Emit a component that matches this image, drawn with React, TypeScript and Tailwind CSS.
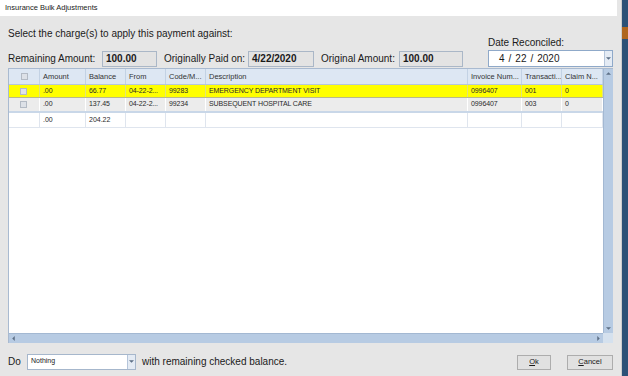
import React from "react";

const COLS = "grid grid-cols-[31px_46px_40px_40px_40px_262px_54px_40px_41px]";

function Tri({ dir, className = "" }: { dir: "up" | "down" | "left" | "right"; className?: string }) {
  const pts =
    dir === "up" ? "0,4 4,0 8,4" : dir === "down" ? "0,0 8,0 4,4" : dir === "left" ? "4,0 4,8 0,4" : "0,0 0,8 4,4";
  const w = dir === "up" || dir === "down" ? 8 : 4;
  const h = dir === "up" || dir === "down" ? 4 : 8;
  return (
    <svg width={w / 2 + 1} height={h / 2 + 1} viewBox={`0 0 ${w} ${h}`} className={className}>
      <polygon points={pts} fill="#5d6f86" />
    </svg>
  );
}

function Check() {
  return <div className="w-[7px] h-[7px] border border-[#b3bac4] bg-[#dde1e7]" />;
}

const headers = ["", "Amount", "Balance", "From", "Code/M...", "Description", "Invoice Num...", "Transacti...", "Claim N..."];

const rows = [
  { cells: [".00", "66.77", "04-22-2...", "99283", "EMERGENCY DEPARTMENT VISIT", "0996407", "001", "0"], bg: "bg-[#ffff00]", sep: "border-[#e2e27a]", border: "border-b border-[#b9b98a]" },
  { cells: [".00", "137.45", "04-22-2...", "99234", "SUBSEQUENT HOSPITAL CARE", "0996407", "003", "0"], bg: "bg-[#ececec]", sep: "border-[#ffffff]", border: "" },
];

export default function App() {
  return (
    <div className="w-[628px] h-[376px] flex overflow-hidden font-['Liberation_Sans',Arial,sans-serif] text-[#1a1a1a]">
      <div className="w-[622px] h-full flex flex-col bg-[#e6e6e6] border-r border-[#cdcdcd]">
        <div className="h-[16px] bg-white flex items-center pl-[5px] mr-[4px] text-[7.5px] text-[#222]">
          Insurance Bulk Adjustments
        </div>
        <div className="flex-1 flex flex-col px-[8px]">
          <div className="h-[52px] flex justify-between">
            <div className="flex flex-col">
              <div className="mt-[12px] text-[10px] leading-[12px]">Select the charge(s) to apply this payment against:</div>
              <div className="mt-[11px] h-[16px] flex items-center text-[10px] leading-[12px]">
                <span className="w-[94px]">Remaining Amount:</span>
                <div className="w-[55px] h-[16px] border border-[#aab7c7] bg-[#e3e3e3] flex items-center pl-[3px] font-bold">100.00</div>
                <span className="w-[84px] ml-[7px]">Originally Paid on:</span>
                <div className="w-[66px] h-[16px] border border-[#aab7c7] bg-[#e3e3e3] flex items-center pl-[3px] font-bold">4/22/2020</div>
                <span className="w-[78px] ml-[7px]">Original Amount:</span>
                <div className="w-[64px] h-[16px] border border-[#aab7c7] bg-[#e3e3e3] flex items-center pl-[3px] font-bold">100.00</div>
              </div>
            </div>
            <div className="w-[125px] flex flex-col justify-end pb-[1px]">
              <div className="text-[10px] leading-[12px]">Date Reconciled:</div>
              <div className="mt-[1px] h-[17px] border border-[#8fa9c9] bg-white flex text-[10px]">
                <div className="flex-1 flex items-center pl-[10px] gap-[4px]">
                  <span>4</span>
                  <span>/</span>
                  <span>22</span>
                  <span>/</span>
                  <span>2020</span>
                </div>
                <div className="w-[8px] border-l border-[#b5c5da] bg-[#e4ebf4] flex items-center justify-center">
                  <Tri dir="down" />
                </div>
              </div>
            </div>
          </div>

          <div className="h-[275px] flex flex-col border-l border-t border-[#a9bad0]">
            <div className="flex-1 flex min-h-0">
              <div className="flex-1 bg-white flex flex-col">
                <div className={`${COLS} h-[16px] bg-[#dde7f3] border-b border-[#b6c7dc]`}>
                  {headers.map((h, i) => (
                    <div key={i} className="border-r border-[#c3d2e4] flex items-center pl-[3px] text-[7.5px] text-[#333] whitespace-nowrap overflow-hidden">
                      {i === 0 ? (
                        <div className="w-full flex justify-center pr-[3px]">
                          <Check />
                        </div>
                      ) : (
                        h
                      )}
                    </div>
                  ))}
                </div>
                {rows.map((r, ri) => (
                  <div key={ri} className={`${COLS} h-[13px] ${r.bg} ${r.border}`}>
                    <div className={`border-r ${r.sep} flex items-center justify-center pr-[1px]`}>
                      <Check />
                    </div>
                    {r.cells.map((c, ci) => (
                      <div key={ci} className={`border-r ${r.sep} flex items-center pl-[3px] text-[7px] tracking-[-0.1px] text-[#2a2a2a] whitespace-nowrap overflow-hidden`}>
                        {c}
                      </div>
                    ))}
                  </div>
                ))}
                <div className="h-[2px] bg-[#c9d7e8]" />
                <div className={`${COLS} h-[15px] border-b border-[#dfe5ee]`}>
                  {["", ".00", "204.22", "", "", "", "", "", ""].map((c, ci) => (
                    <div key={ci} className="border-r border-[#dfe5ee] flex items-center pl-[3px] text-[7px] text-[#2a2a2a]">
                      {c}
                    </div>
                  ))}
                </div>
                <div className="flex-1" />
              </div>
              <div className="w-[10px] bg-[#b7cbe3] border-l border-[#a3b8d2] flex flex-col items-center justify-between py-[3px]">
                <Tri dir="up" />
                <Tri dir="down" />
              </div>
            </div>
            <div className="h-[10px] flex">
              <div className="flex-1 bg-[#b7cbe3] border-t border-[#a3b8d2] flex items-center justify-between px-[3px]">
                <Tri dir="left" />
                <Tri dir="right" />
              </div>
              <div className="w-[10px] bg-[#d5e1ee]" />
            </div>
          </div>

          <div className="mt-[10px] h-[17px] flex items-center text-[10px]">
            <span className="w-[19px]">Do</span>
            <div className="w-[109px] h-[16px] border border-[#a6b7cc] bg-white flex">
              <div className="flex-1 flex items-center pl-[3px] text-[7px]">Nothing</div>
              <div className="w-[8px] border-l border-[#b5c5da] bg-[#e4ebf4] flex items-center justify-center">
                <Tri dir="down" />
              </div>
            </div>
            <span className="ml-[6px]">with remaining checked balance.</span>
            <div className="flex-1" />
            <button className="w-[34px] h-[15px] mt-[1px] border border-[#adadad] bg-[#e1e1e1] text-[7.5px] flex items-center justify-center">
              <span className="underline">O</span>k
            </button>
            <button className="ml-[16px] w-[46px] h-[15px] mt-[1px] border border-[#adadad] bg-[#e1e1e1] text-[7.5px] flex items-center justify-center">
              <span className="underline">C</span>ancel
            </button>
          </div>
        </div>
      </div>
      <div className="w-[6px] h-full bg-[#2c5177] flex flex-col">
        <div className="h-[27px]" />
        <div className="h-[12px] bg-[#b0661e]" />
      </div>
    </div>
  );
}
